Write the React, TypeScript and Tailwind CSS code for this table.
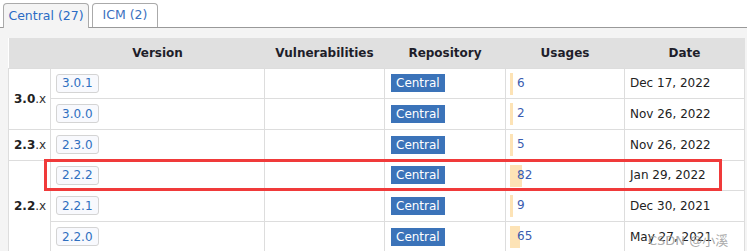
import React from "react";

type Row = { v: string; usages: number; date: string; h: string; group?: { major: string; span: number } };

const rows: Row[] = [
  { v: "3.0.1", usages: 6, date: "Dec 17, 2022", h: "h-[30px]", group: { major: "3.0", span: 2 } },
  { v: "3.0.0", usages: 2, date: "Nov 26, 2022", h: "h-[31px]" },
  { v: "2.3.0", usages: 5, date: "Nov 26, 2022", h: "h-[31px]", group: { major: "2.3", span: 1 } },
  { v: "2.2.2", usages: 82, date: "Jan 29, 2022", h: "h-[30px]", group: { major: "2.2", span: 3 } },
  { v: "2.2.1", usages: 9, date: "Dec 30, 2021", h: "h-[31px]" },
  { v: "2.2.0", usages: 65, date: "May 27, 2021", h: "h-[31px]" },
];

export default function App() {
  return (
    <div
      className="relative w-[747px] h-[251px] overflow-hidden bg-white text-[12px] text-[#222]"
      style={{ fontFamily: '"DejaVu Sans", Verdana, sans-serif' }}
    >
      {/* Tabs */}
      <div className="flex items-end h-[28px] pl-[3px] gap-[3px] border-b border-[#999]">
        <div className="h-[25px] w-[86px] -mb-px border border-[#aaa] border-b-0 rounded-t-[4px] bg-[#f4f4f4] flex items-center justify-center text-[#2a6bc4] text-[12.5px]">
          Central (27)
        </div>
        <div className="h-[24px] w-[66px] border border-[#aaa] border-b-0 rounded-t-[4px] bg-white flex items-center justify-center text-[#3a6fc0] text-[12.5px]">
          ICM (2)
        </div>
      </div>
      {/* Content */}
      <div className="bg-[#f4f4f4] pt-[10px] pl-[8px] pr-[3px] h-full">
        <table className="w-[736px] border-collapse bg-white table-fixed">
          <colgroup>
            <col className="w-[42px]" />
            <col className="w-[214px]" />
            <col className="w-[120px]" />
            <col className="w-[121px]" />
            <col className="w-[119px]" />
            <col className="w-[120px]" />
          </colgroup>
          <thead>
            <tr className="bg-[#e0e0e0] h-[30px] font-bold text-[#1e1e2a]">
              <th></th>
              <th className="text-center">Version</th>
              <th className="text-center">Vulnerabilities</th>
              <th className="text-center">Repository</th>
              <th className="text-center">Usages</th>
              <th className="text-center">Date</th>
            </tr>
          </thead>
          <tbody>
            {rows.map((r) => (
              <tr key={r.v} className={r.h}>
                {r.group && (
                  <td rowSpan={r.group.span} className="border border-[#ddd] pl-[5px] align-middle whitespace-nowrap">
                    <span className="font-bold">{r.group.major}</span>
                    <span className="text-[#333]">.x</span>
                  </td>
                )}
                <td className="border border-[#ddd] pl-[5px] align-middle">
                  <span className="inline-flex items-center h-[19px] px-[5px] border border-[#d4d4d4] rounded-[3px] bg-[#f8f9fd] text-[#2f6fc0]">
                    {r.v}
                  </span>
                </td>
                <td className="border border-[#ddd]"></td>
                <td className="border border-[#ddd] pl-[6px] align-middle">
                  <span className="inline-flex items-center h-[18px] px-[5px] bg-[#3b73b9] text-white">Central</span>
                </td>
                <td className="border border-[#ddd] p-0 align-top">
                  <div className="relative h-[29px]">
                    <div
                      className="absolute left-[4px] top-[4px] h-[22px] bg-[#fde3b6]"
                      style={{ width: Math.max(3, Math.round((r.usages * 12) / 82)) }}
                    />
                    <span className="relative block pl-[11px] pt-[5px] text-[#3a5cb0]">{r.usages}</span>
                  </div>
                </td>
                <td className="border border-[#ddd] pl-[5px] align-middle">{r.date}</td>
              </tr>
            ))}
          </tbody>
        </table>
      </div>
      {/* Highlight box */}
      <div className="absolute left-[44px] top-[159px] w-[678px] h-[32px] border-[3px] border-[#f03a3a]" />
      {/* Watermark */}
      <div
        className="absolute left-[648px] top-[231px] text-[13px] text-[#a0a0a0]/90"
        style={{ fontFamily: '"DejaVu Sans", "Noto Sans CJK SC", sans-serif' }}
      >
        CSDN @小溪
      </div>
    </div>
  );
}
